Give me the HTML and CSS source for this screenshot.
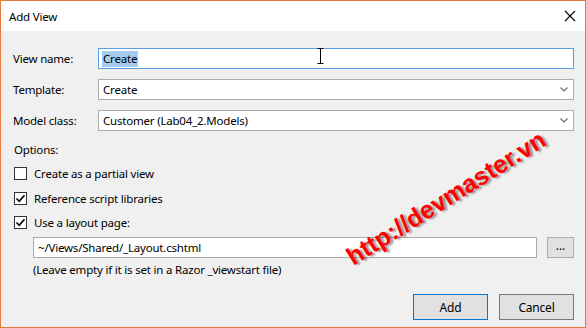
FILE: index.html
```html
<!DOCTYPE html>
<html>
<head>
<meta charset="utf-8">
<link rel="stylesheet" href="styles.css">
</head>
<body>
<div class="window">
  <div class="titlebar">
    <span class="title">Add View</span>
    <svg class="close" width="12" height="12" viewBox="0 0 12 12"><path d="M1 1L11 11M11 1L1 11" stroke="#000" stroke-width="1.1" fill="none"/></svg>
  </div>
  <div class="content">
    <div class="field">
      <span class="label">View name:</span>
      <div class="input focused"><span class="sel">Create</span></div>
    </div>
    <div class="field">
      <span class="label">Template:</span>
      <div class="input select"><span>Create</span><svg class="chev" width="8" height="5" viewBox="0 0 8 5"><path d="M0.5 0.5L4 4L7.5 0.5" stroke="#6d6d6d" stroke-width="1.2" fill="none"/></svg></div>
    </div>
    <div class="field">
      <span class="label">Model class:</span>
      <div class="input select"><span>Customer (Lab04_2.Models)</span><svg class="chev" width="8" height="5" viewBox="0 0 8 5"><path d="M0.5 0.5L4 4L7.5 0.5" stroke="#6d6d6d" stroke-width="1.2" fill="none"/></svg></div>
    </div>
    <div class="options">
      <div class="row">Options:</div>
      <div class="row"><span class="cb"></span>Create as a partial view</div>
      <div class="row"><span class="cb"><svg width="11" height="11" viewBox="0 0 11 11"><path d="M1.5 5.5L4.2 8.3L9.5 2.2" stroke="#000" stroke-width="1.7" fill="none"/></svg></span>Reference script libraries</div>
      <div class="row"><span class="cb"><svg width="11" height="11" viewBox="0 0 11 11"><path d="M1.5 5.5L4.2 8.3L9.5 2.2" stroke="#000" stroke-width="1.7" fill="none"/></svg></span>Use a layout page:</div>
    </div>
    <div class="layout">
      <div class="input grow">~/Views/Shared/_Layout.cshtml</div>
      <button class="browse">...</button>
    </div>
    <div class="hint">(Leave empty if it is set in a Razor _viewstart file)</div>
    <div class="buttons">
      <button class="btn default">Add</button>
      <button class="btn">Cancel</button>
    </div>
  </div>
  <svg class="ibeam" width="7" height="16" viewBox="0 0 7 16"><path d="M0.5 0.5H6.5M3.5 0.5V15.5M0.5 15.5H6.5" stroke="#000" stroke-width="1" fill="none"/></svg>
  <div class="watermark">http://devmaster.vn</div>
</div>
</body>
</html>
```

FILE: styles.css
```css
* { box-sizing: border-box; }
html, body { margin: 0; padding: 0; }
body {
  font-family: "Noto Sans", "Open Sans", sans-serif;
  font-size: 11.5px;
  letter-spacing: -0.2px;
  color: #000;
}
.window {
  position: relative;
  width: 586px;
  height: 328px;
  border: 1px solid #e9783b;
  background: #f0f0f0;
  display: flex;
  flex-direction: column;
  overflow: hidden;
}
.titlebar {
  height: 30px;
  flex: none;
  background: #fff;
  display: flex;
  align-items: center;
  justify-content: space-between;
  padding: 0 9px 0 8px;
}
.content {
  padding: 17px 11px 0 12px;
  display: flex;
  flex-direction: column;
}
.field {
  display: flex;
  align-items: center;
  height: 21px;
  margin-bottom: 10px;
}
.label { width: 85px; flex: none; }
.input {
  flex: 1;
  height: 21px;
  border: 1px solid #adadad;
  background: #fff;
  display: flex;
  align-items: center;
  padding: 0 4px;
  white-space: nowrap;
}
.input.focused { border-color: #5a9fe6; padding-left: 3px; }
.sel {
  background: #a4cdf1;
  padding: 0 1px;
  line-height: 16px;
}
.select { justify-content: space-between; padding-right: 5px; }
.chev { flex: none; }
.options { display: flex; flex-direction: column; margin-top: -4px; }
.row {
  height: 24.5px;
  display: flex;
  align-items: center;
  padding-left: 1px;
}
.cb {
  width: 13px;
  height: 13px;
  border: 1px solid #333;
  background: #fff;
  margin-right: 7px;
  display: flex;
  align-items: center;
  justify-content: center;
}
.layout {
  display: flex;
  margin: 2px 0 0 20px;
  gap: 10px;
}
.grow { flex: 1; }
.browse {
  width: 27px;
  height: 21px;
  border: 1px solid #adadad;
  background: #e1e1e1;
  font-family: inherit;
  font-size: 12px;
  padding: 0 0 4px 0;
  line-height: 1;
  color: #000;
}
.hint {
  margin: 4px 0 0 20px;
  height: 16px;
  line-height: 16px;
}
.buttons {
  display: flex;
  justify-content: flex-end;
  gap: 11px;
  margin-top: 16px;
}
.btn {
  width: 75px;
  height: 26px;
  border: 1px solid #7a7a7a;
  background: #e1e1e1;
  font-family: inherit;
  font-size: 12px;
  letter-spacing: -0.2px;
  color: #000;
  padding: 0;
}
.btn.default { border-color: #0078d7; }
.ibeam {
  position: absolute;
  left: 316px;
  top: 47px;
}
.watermark {
  position: absolute;
  left: 445px;
  top: 197px;
  transform: translate(-50%, -50%) rotate(-32deg);
  font-family: "Liberation Sans", Arial, sans-serif;
  font-weight: bold;
  font-size: 25px;
  letter-spacing: 0;
  color: #ff0000;
  white-space: nowrap;
  text-shadow: 2px 2px 2px rgba(0,0,0,0.4);
}
```
